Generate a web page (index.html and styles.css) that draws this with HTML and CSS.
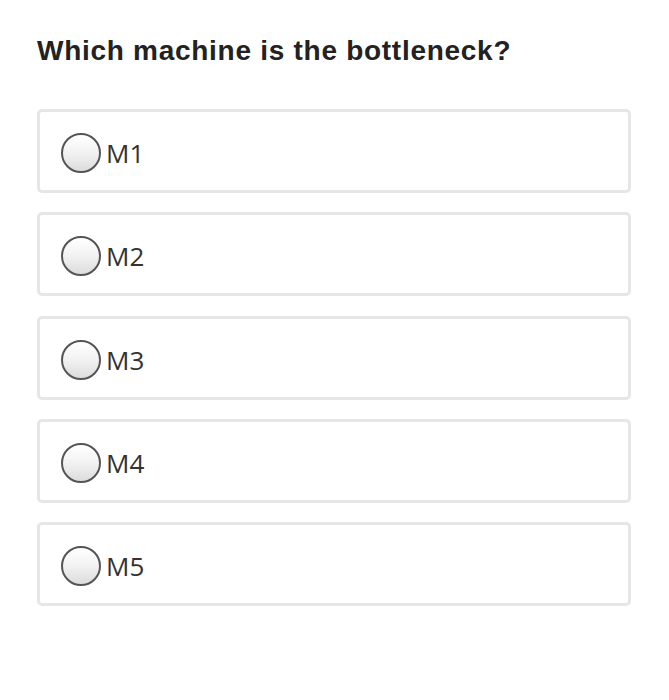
FILE: index.html
```html
<!DOCTYPE html>
<html>
<head>
<meta charset="utf-8">
<link rel="stylesheet" href="styles.css">
</head>
<body>
<div class="page">
  <h1 class="question">Which machine is the bottleneck?</h1>
  <div class="options">
    <label class="option"><span class="radio"></span><span class="label">M1</span></label>
    <label class="option"><span class="radio"></span><span class="label">M2</span></label>
    <label class="option"><span class="radio"></span><span class="label">M3</span></label>
    <label class="option"><span class="radio"></span><span class="label">M4</span></label>
    <label class="option"><span class="radio"></span><span class="label">M5</span></label>
  </div>
</div>
</body>
</html>
```

FILE: styles.css
```css
html, body {
  margin: 0;
  padding: 0;
  background: #ffffff;
}
.page {
  padding: 31px 38px 0 37px;
}
.question {
  margin: 0;
  font-family: "Liberation Sans", Arial, sans-serif;
  font-weight: bold;
  font-size: 28px;
  line-height: 40px;
  color: #222222;
  letter-spacing: 0.72px;
}
.options {
  margin-top: 38px;
  display: flex;
  flex-direction: column;
  gap: 19.3px;
}
.option {
  box-sizing: border-box;
  height: 84px;
  border: 3px solid #e6e6e6;
  border-radius: 5px;
  display: flex;
  align-items: center;
  padding: 4px 0 0 21px;
  gap: 5px;
}
.radio {
  box-sizing: border-box;
  width: 40px;
  height: 40px;
  border-radius: 50%;
  border: 2px solid #555555;
  background: linear-gradient(180deg, #ffffff 0%, #f2f2f2 50%, #dcdcdc 100%);
  flex: none;
}
.label {
  font-family: "Open Sans", sans-serif;
  font-size: 26px;
  color: #333333;
  line-height: 1;
}
```
